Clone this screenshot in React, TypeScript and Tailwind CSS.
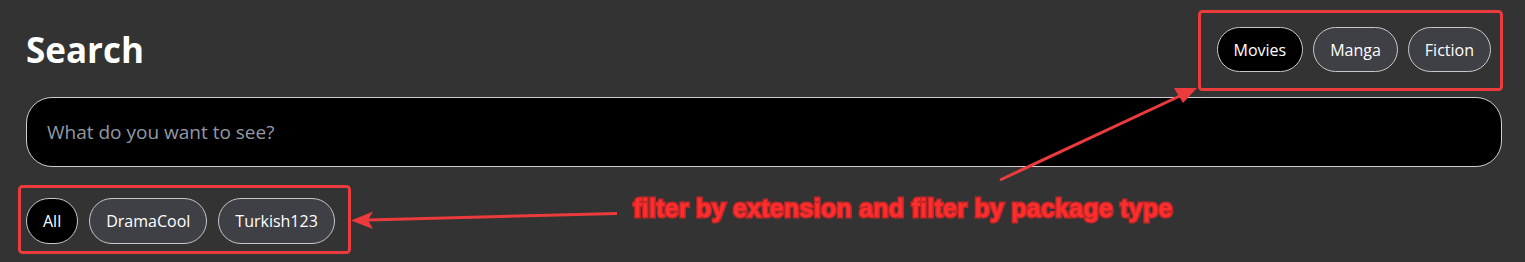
const sources = ["Movies", "Manga", "Fiction"];
const extensions = ["All", "DramaCool", "Turkish123"];

function Chip({ label, active, tall }: { label: string; active?: boolean; tall?: boolean }) {
  return (
    <button
      className={
        "flex items-center justify-center rounded-full border border-[#c8c8c8] px-4 text-[16px] text-white " +
        (tall ? "h-[46px] " : "h-[45px] ") +
        (active ? "bg-black" : "bg-[#3f3f46]")
      }
    >
      {label}
    </button>
  );
}

function Annotations() {
  return (
    <>
      <svg
        className="pointer-events-none absolute left-0 top-0"
        width="1525"
        height="262"
        viewBox="0 0 1525 262"
      >
        <g stroke="#ec3b3d" strokeWidth="3" fill="none">
          <rect x="1199.5" y="11.5" width="302" height="78" rx="3" />
          <rect x="19.5" y="186.5" width="330" height="66" rx="3" />
          <line x1="1000" y1="180" x2="1182" y2="95" />
          <line x1="617" y1="213.5" x2="368" y2="220" />
        </g>
        <g fill="#ec3b3d">
          <polygon points="1197,88 1174,88 1183,103" />
          <polygon points="351,220.5 373,211.5 368,220 373,229" />
        </g>
      </svg>
      <div className="pointer-events-none absolute left-[633px] top-[194px] font-['Liberation_Sans',Arial,sans-serif] text-[25px] font-bold leading-[28px] tracking-[0.01em] text-[#ff2e2e] [-webkit-text-stroke:3px_#c42626] [paint-order:stroke_fill]">
        filter by extension and filter by package type
      </div>
    </>
  );
}

export default function App() {
  return (
    <div className="relative h-[262px] w-full overflow-hidden bg-[#333333] pl-[26px] pr-[23px] pt-[27px] font-['Open_Sans',sans-serif]">
      <div className="flex h-[45px] items-center justify-between">
        <h1 className="text-[35px] font-bold leading-none text-white">Search</h1>
        <div className="mr-[11px] flex gap-2.5">
          {sources.map((s, i) => (
            <Chip key={s} label={s} active={i === 0} />
          ))}
        </div>
      </div>

      <input
        className="mt-[25px] h-[70px] w-full rounded-[26px] border border-[#cfcfcf] bg-black px-5 text-[19px] text-white outline-none placeholder:text-[#9299a3]"
        placeholder="What do you want to see?"
      />

      <div className="mt-[31px] flex gap-[11px]">
        {extensions.map((e, i) => (
          <Chip key={e} label={e} active={i === 0} tall />
        ))}
      </div>

      <Annotations />
    </div>
  );
}
